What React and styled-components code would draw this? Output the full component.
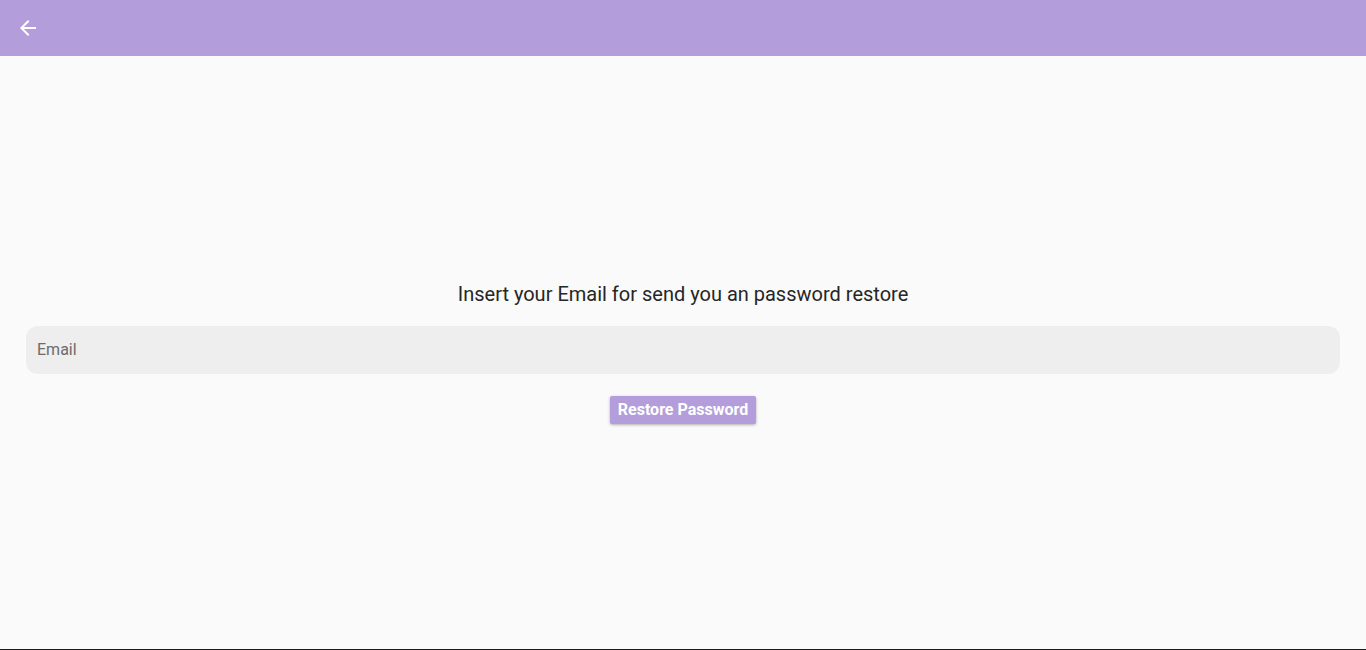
import React from "react";
import styled, { createGlobalStyle } from "styled-components";

const GlobalStyle = createGlobalStyle`
  html, body {
    margin: 0;
    padding: 0;
    background: #fafafa;
    font-family: Roboto, "Liberation Sans", sans-serif;
  }
`;

const Page = styled.div`
  height: 650px;
  display: flex;
  flex-direction: column;
  box-sizing: border-box;
  border-bottom: 1px solid #1a1a1a;
  background: #fafafa;
`;

const AppBar = styled.header`
  height: 56px;
  flex-shrink: 0;
  background: #b39ddb;
  display: flex;
  align-items: center;
  padding-left: 16px;
`;

const BackButton = styled.button`
  width: 24px;
  height: 24px;
  padding: 0;
  border: none;
  background: none;
  color: #fff;
  cursor: pointer;
  display: flex;
`;

const Body = styled.main`
  flex: 1;
  display: flex;
  flex-direction: column;
  justify-content: center;
  align-items: center;
  padding: 0 26px;
`;

const Title = styled.p`
  margin: 0 0 20px;
  font-size: 20px;
  line-height: 24px;
  color: #262626;
`;

const EmailInput = styled.input`
  width: 100%;
  height: 48px;
  box-sizing: border-box;
  border: none;
  outline: none;
  border-radius: 12px;
  background: #eeeeee;
  padding: 0 11px;
  font-family: inherit;
  font-size: 16px;
  color: #212121;

  &::placeholder {
    color: #6b6b6b;
  }
`;

const RestoreButton = styled.button`
  margin-top: 22px;
  height: 28px;
  padding: 0 8px;
  border: none;
  border-radius: 2px;
  background: #b39ddb;
  color: #fff;
  font-family: inherit;
  font-size: 16px;
  font-weight: 700;
  box-shadow: 0 1px 3px rgba(0, 0, 0, 0.3);
  cursor: pointer;
`;

export default function App() {
  return (
    <>
      <GlobalStyle />
      <Page>
        <AppBar>
          <BackButton aria-label="Back">
            <svg width="24" height="24" viewBox="0 0 24 24" fill="currentColor">
              <path d="M20 11H7.83l5.59-5.59L12 4l-8 8 8 8 1.41-1.41L7.83 13H20v-2z" />
            </svg>
          </BackButton>
        </AppBar>
        <Body>
          <Title>Insert your Email for send you an password restore</Title>
          <EmailInput type="email" placeholder="Email" />
          <RestoreButton>Restore Password</RestoreButton>
        </Body>
      </Page>
    </>
  );
}
